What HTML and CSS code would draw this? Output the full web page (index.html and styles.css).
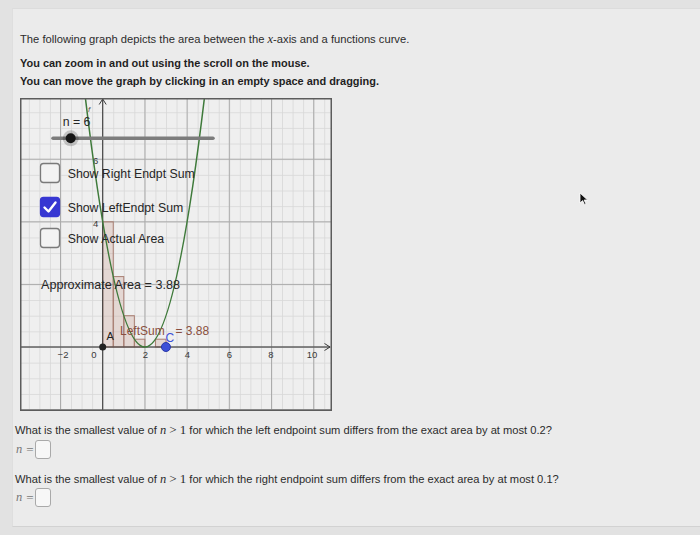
FILE: index.html
```html
<!DOCTYPE html>
<html>
<head>
<meta charset="utf-8">
<link rel="stylesheet" href="styles.css">
</head>
<body>
<div class="page">
  <div class="card">
    <p class="intro">The following graph depicts the area between the <span class="m">x</span>-axis and a functions curve.</p>
    <p class="hint">You can zoom in and out using the scroll on the mouse.<br>You can move the graph by clicking in an empty space and dragging.</p>
    <div class="graph">
      <svg class="plot" width="312" height="313" viewBox="0 0 312 313">
        <defs>
          <pattern id="minor" x="82.7" y="249" width="10.55" height="15.65" patternUnits="userSpaceOnUse">
            <rect width="0.8" height="15.65" fill="#d8d8d8"/>
            <rect width="10.55" height="0.8" fill="#d8d8d8"/>
          </pattern>
          <pattern id="major" x="82.2" y="248.5" width="42.2" height="62.6" patternUnits="userSpaceOnUse">
            <rect width="1" height="62.6" fill="#ababab"/>
            <rect width="42.2" height="1" fill="#ababab"/>
          </pattern>
        </defs>
        <rect width="312" height="313" fill="#efefef"/>
        <rect width="312" height="313" fill="url(#minor)"/>
        <rect width="312" height="313" fill="url(#major)"/>

        <g class="bars">
          <rect x="82.7" y="123.8" width="10.55" height="125.2"/>
          <rect x="93.25" y="178.6" width="10.55" height="70.4"/>
          <rect x="103.8" y="217.7" width="10.55" height="31.3"/>
          <rect x="114.35" y="241.2" width="10.55" height="7.8"/>
          <rect x="135.45" y="241.2" width="10.55" height="7.8"/>
        </g>

        <line x1="0" y1="249" x2="310" y2="249" class="axis"/>
        <path d="M304.5 245.5 L310 249 L304.5 252.5" class="axis"/>
        <line x1="82.7" y1="313" x2="82.7" y2="1" class="axis"/>
        <path d="M79.2 6.5 L82.7 1 L86.2 6.5" class="axis"/>

        <g class="ticks">
          <text x="43" y="260">−2</text>
          <text x="74" y="260">0</text>
          <text x="125.5" y="260">2</text>
          <text x="167.5" y="260">4</text>
          <text x="209.5" y="260">6</text>
          <text x="251" y="260">8</text>
          <text x="292" y="260">10</text>
          <text x="75.7" y="66">6</text>
          <text x="75.7" y="129">4</text>
        </g>
        <text x="68" y="14" class="flabel">f</text>

        <path d="M65.19 -1.68 Q124.9 499.68 184.61 -1.68" class="curve"/>

        <circle cx="82.7" cy="249" r="3.5" fill="#222"/>
        <circle cx="145.95" cy="249" r="4.5" fill="#3d50d8" stroke="#2a38a8" stroke-width="1"/>
        <text x="86.5" y="242" class="ptlabel">A</text>
        <text x="100" y="236.5" class="sumlabel">LeftSum</text>
        <text x="145.5" y="243.5" class="clabel">C</text>
        <text x="155.5" y="236.5" class="sumlabel">= 3.88</text>

        <text x="21" y="190.5" class="wtext big">Approximate Area = 3.88</text>

        <line x1="33" y1="40.3" x2="193" y2="40.3" class="slider"/>
        <circle cx="50.7" cy="40.3" r="8" fill="rgba(0,0,0,0.18)"/>
        <circle cx="50.7" cy="40.3" r="5" fill="#161616"/>
        <text x="42.7" y="27.5" class="wtext">n = 6</text>

        <rect x="20.5" y="65.5" width="19" height="19" rx="3" class="cb"/>
        <text x="47.7" y="79.5" class="wtext">Show Right Endpt Sum</text>
        <rect x="20.5" y="99.5" width="19" height="19" rx="3" class="cb on"/>
        <path d="M24.5 109.5 L28.5 113.5 L35.5 104.5" class="tick"/>
        <text x="47.7" y="113.5" class="wtext">Show LeftEndpt Sum</text>
        <rect x="20.5" y="130.5" width="19" height="19" rx="3" class="cb"/>
        <text x="47.7" y="144.5" class="wtext">Show Actual Area</text>

        <rect x="0.75" y="0.75" width="310.5" height="311.5" class="frame"/>
      </svg>
    </div>

    <p class="q">What is the smallest value of <span class="m">n</span> <span class="mr">&gt;</span> <span class="mr">1</span> for which the left endpoint sum differs from the exact area by at most 0.2?</p>
    <div class="ans"><span class="m gray">n</span><span class="eq">=</span><span class="box"></span></div>

    <p class="q q2">What is the smallest value of <span class="m">n</span> <span class="mr">&gt;</span> <span class="mr">1</span> for which the right endpoint sum differs from the exact area by at most 0.1?</p>
    <div class="ans a2"><span class="m gray">n</span><span class="eq">=</span><span class="box"></span></div>
  </div>
  <svg class="cursor" width="10" height="14" viewBox="0 0 10 14">
    <path d="M1 1 L1 11 L3.6 8.6 L5.6 12.8 L7 12.1 L5.1 8 L8.6 8 Z" fill="#111" stroke="#fff" stroke-width="0.8"/>
  </svg>
</div>
</body>
</html>
```

FILE: styles.css
```css
html, body {
  margin: 0;
  padding: 0;
  background: #e2e2e2;
}

.page {
  position: relative;
  width: 700px;
  height: 535px;
  overflow: hidden;
  padding: 8px 0 0 12px;
  box-sizing: border-box;
  font-family: "Liberation Sans", Arial, sans-serif;
  color: #2b2b2b;
}

.card {
  background: #ebebeb;
  height: 519px;
  width: 700px;
  box-sizing: border-box;
  padding-top: 23px;
  border-top: 1px solid #dcdcdc;
  border-left: 1px solid #dedede;
  border-bottom: 1px solid #d2d2d2;
}

.intro {
  margin: 0 0 0 7px;
  font-size: 11.2px;
  line-height: 14px;
}

.hint {
  margin: 8px 0 0 7px;
  font-size: 10.95px;
  line-height: 18px;
  font-weight: bold;
  color: #1f1f1f;
}

.m {
  font-family: "Liberation Serif", "DejaVu Serif", serif;
  font-style: italic;
  font-size: 12.5px;
}

.mr {
  font-family: "Liberation Serif", "DejaVu Serif", serif;
  font-size: 13px;
}

.gray {
  color: #777;
}

.graph {
  margin: 8px 0 0 7px;
  width: 312px;
  height: 313px;
}

.plot {
  display: block;
  font-family: "Liberation Sans", Arial, sans-serif;
}

.bars rect {
  fill: rgba(190, 130, 115, 0.22);
  stroke: #a87e72;
  stroke-width: 1;
}

.axis {
  stroke: #3a3a3a;
  stroke-width: 1;
  fill: none;
}

.ticks text {
  font-size: 9.5px;
  fill: #3a3a3a;
  text-anchor: middle;
}

.flabel {
  font-size: 8px;
  font-style: italic;
  fill: #555;
}

.curve {
  fill: none;
  stroke: #3e7a3a;
  stroke-width: 1.5;
}

.ptlabel {
  font-size: 11px;
  fill: #222;
}

.sumlabel {
  font-size: 12px;
  fill: #8a4f40;
}

.clabel {
  font-size: 12px;
  fill: #3d50d8;
}

.wtext {
  font-size: 12.3px;
  fill: #262626;
}

.wtext.big {
  font-size: 12.6px;
}

.slider {
  stroke: #7c7c7c;
  stroke-width: 3.5;
  stroke-linecap: round;
}

.cb {
  fill: #f3f3f3;
  stroke: #7a7a7a;
  stroke-width: 1.3;
}

.cb.on {
  fill: #3737d2;
  stroke: #3737d2;
}

.tick {
  fill: none;
  stroke: #fff;
  stroke-width: 2.4;
  stroke-linecap: round;
  stroke-linejoin: round;
}

.frame {
  fill: none;
  stroke: #5c5c5c;
  stroke-width: 1.5;
}

.q {
  margin: 12px 0 0 2px;
  font-size: 11.15px;
  line-height: 14px;
}

.q2 {
  margin-top: 13px;
}

.ans {
  display: flex;
  align-items: center;
  margin: 3px 0 0 3px;
  height: 19px;
}

.a2 {
  margin-top: 2px;
}

.eq {
  font-family: "Liberation Serif", "DejaVu Serif", serif;
  font-size: 13px;
  color: #777;
  margin: 0 1px 0 4px;
}

.box {
  display: inline-block;
  width: 14px;
  height: 17px;
  border: 1px solid #a9a9a9;
  border-radius: 3px;
  background: #f7f7f7;
}

.cursor {
  position: absolute;
  left: 579px;
  top: 192px;
}
```
